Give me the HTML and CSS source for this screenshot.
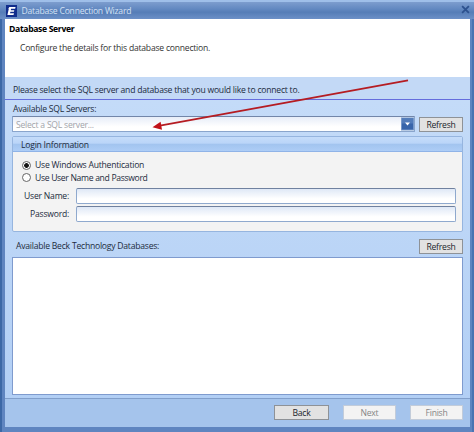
FILE: index.html
```html
<!DOCTYPE html>
<html lang="en">
<head>
<meta charset="utf-8">
<title>Database Connection Wizard</title>
<link rel="stylesheet" href="styles.css">
</head>
<body>
<div class="window">
  <header class="titlebar">
    <svg class="logo" viewBox="0 0 11 12"><rect width="11" height="12" fill="#102d8c"/><path d="M3.4 2H9.6L9.1 3.8H5.1L4.8 5.2H8.3L7.9 6.8H4.4L4 8.3H8L7.5 10H1.4L2.8 3.7H2.2Z" fill="#fff"/></svg>
    <span class="title">Database Connection Wizard</span>
    <svg class="close" viewBox="0 0 8 8"><path d="M1 1L7 7M7 1L1 7" stroke="#2c518e" stroke-width="1.6"/></svg>
  </header>
  <section class="intro">
    <h1>Database Server</h1>
    <p>Configure the details for this database connection.</p>
  </section>
  <div class="instruction"><span>Please select the SQL server and database that you would like to connect to.</span></div>
  <main class="content">
    <div class="label servers">Available SQL Servers:</div>
    <div class="row">
      <div class="combo"><span>Select a SQL server...</span><svg viewBox="0 0 13 13"><rect x=".5" y=".5" width="12" height="12" fill="#3865aa" stroke="#7799ca"/><path d="M1 1H12V6H1Z" fill="#527cba"/><path d="M4 5H9L6.5 8Z" fill="#fff"/></svg></div>
      <button>Refresh</button>
    </div>
    <section class="group">
      <h2><span>Login Information</span></h2>
      <div class="choice"><i class="radio on"></i><span class="auth">Use Windows Authentication</span></div>
      <div class="choice"><i class="radio"></i><span class="auth user">Use User Name and Password</span></div>
      <div class="field first"><span>User Name:</span><div class="input"></div></div>
      <div class="field"><span>Password:</span><div class="input"></div></div>
    </section>
    <div class="row databases"><span class="dblabel">Available Beck Technology Databases:</span><button>Refresh</button></div>
    <div class="list"></div>
  </main>
  <footer>
    <button class="back">Back</button>
    <button class="next" disabled>Next</button>
    <button class="finish" disabled>Finish</button>
  </footer>
  <svg class="arrow" viewBox="0 0 474 432"><path d="M408 80.3L160 125.6" stroke="#b51c22" stroke-width="1.8"/><path d="M152.5 127.2L160.6 121.8L162 129.8Z" fill="#c1121a"/></svg>
</div>
</body>
</html>
```
FILE: styles.css
```css
* { box-sizing: border-box; }
body { margin: 0; font: 8.6px/12px "Open Sans", "Noto Sans", sans-serif; letter-spacing: -.23px; color: #1c2b3d; }
.window { position: relative; width: 474px; height: 432px; overflow: hidden; padding: 0 4px 5px 5px; display: flex; flex-direction: column; background: linear-gradient(90deg, #3c68a6 0 2px, #5f85c0 2px 472px, #4a74b2 472px); }
.titlebar { flex: none; height: 19px; margin: 0 -4px 0 -5px; padding: 0 4px 0 6px; display: flex; align-items: center; border-top: 2px solid #9fbfe9; background: linear-gradient(#7d9dce, #6389c1 40%, #557db7 60%, #6c90c7); color: #d4e1f5; }
.logo { width: 11px; height: 12px; margin-right: 4.5px; }
.title { flex: 1; white-space: nowrap; letter-spacing: -.23px; }
.close { width: 9px; height: 9px; margin-bottom: 2px; }
.intro { flex: none; height: 58px; background: #fff; padding: 4px 0 0 4px; }
h1 { margin: 0; font-size: 8.6px; line-height: 12px; font-weight: 700; color: #000; letter-spacing: -.33px; }
p { margin: 7px 0 0 11px; line-height: 12px; color: #333; }
.instruction { flex: none; height: 23px; padding: 7px 0 0 8px; background: #c3d9f6; border-bottom: 1px solid #656ddd; white-space: nowrap; }
.content { flex: none; height: 298px; padding: 3px 7px 0; background: linear-gradient(#c4dbf8, #b2cff5); }
.label { height: 13px; padding-left: 1px; }
.row { display: flex; justify-content: space-between; height: 16px; }
button { width: 44px; height: 15px; margin: 1px 0 0; padding: 0; border: 1px solid #8e9297; background: #e2e2e2; color: #20242b; font: inherit; letter-spacing: inherit; line-height: 12px; }
.combo { width: 403px; height: 16px; padding: 0 0 0 3px; display: flex; align-items: center; justify-content: space-between; border: 1px solid #8aa5cc; border-top-color: #7286a9; border-radius: 1px; background: linear-gradient(#e7edf8, #fff 70%); color: #a2a4aa; }
.combo span { padding-top: 1px; }
.combo svg { width: 13px; height: 14px; }
.group { height: 96px; margin-top: 4px; border: 1px solid #96b5df; border-radius: 2px; background: #f3f3f3; }
h2 { height: 15px; margin: 0 0 7px; padding: 2px 0 0 8px; border-bottom: 1px solid #8fb3e7; background: linear-gradient(#c5dcfa, #bad5f8 45%, #a2c4ef 50%, #adcdf6); font: inherit; }
.choice { height: 12.5px; padding-left: 9px; display: flex; align-items: center; gap: 4px; }
.user { letter-spacing: -.32px; }
.radio { flex: none; width: 9px; height: 9px; border: 1px solid #666; border-radius: 50%; background: #fff; }
.on { background: radial-gradient(circle, #171717 0 2px, #fff 2.7px); }
.field { display: flex; height: 18.3px; align-items: flex-start; }
.first { margin-top: 4px; }
.field span { width: 56px; text-align: right; line-height: 17px; }
.input { width: 380px; height: 16px; margin-left: 7px; border: 1px solid #8fa9ce; border-top-color: #70819f; border-radius: 2px; background: linear-gradient(#dfe8f6, #fff 70%); }
.databases { margin-top: 6px; }
.dblabel { padding: 2px 0 0 4px; }
.list { height: 138px; margin-top: 3px; border: 1px solid #7f9bce; background: #fff; }
footer { flex: none; height: 29px; padding: 6px 7px 0; display: flex; justify-content: flex-end; border-top: 1px solid #819fcb; background: #a5c4ec; }
footer .back { width: 55px; margin: 0 14px 0 0; }
footer .next { width: 53px; margin: 0 14px 0 0; }
footer .finish { width: 53px; margin: 0; }
button:disabled { border-color: #c2ccda; background: #f3f3f3; color: #858585; }
.arrow { position: absolute; left: 0; top: 0; width: 474px; height: 432px; pointer-events: none; }
```
